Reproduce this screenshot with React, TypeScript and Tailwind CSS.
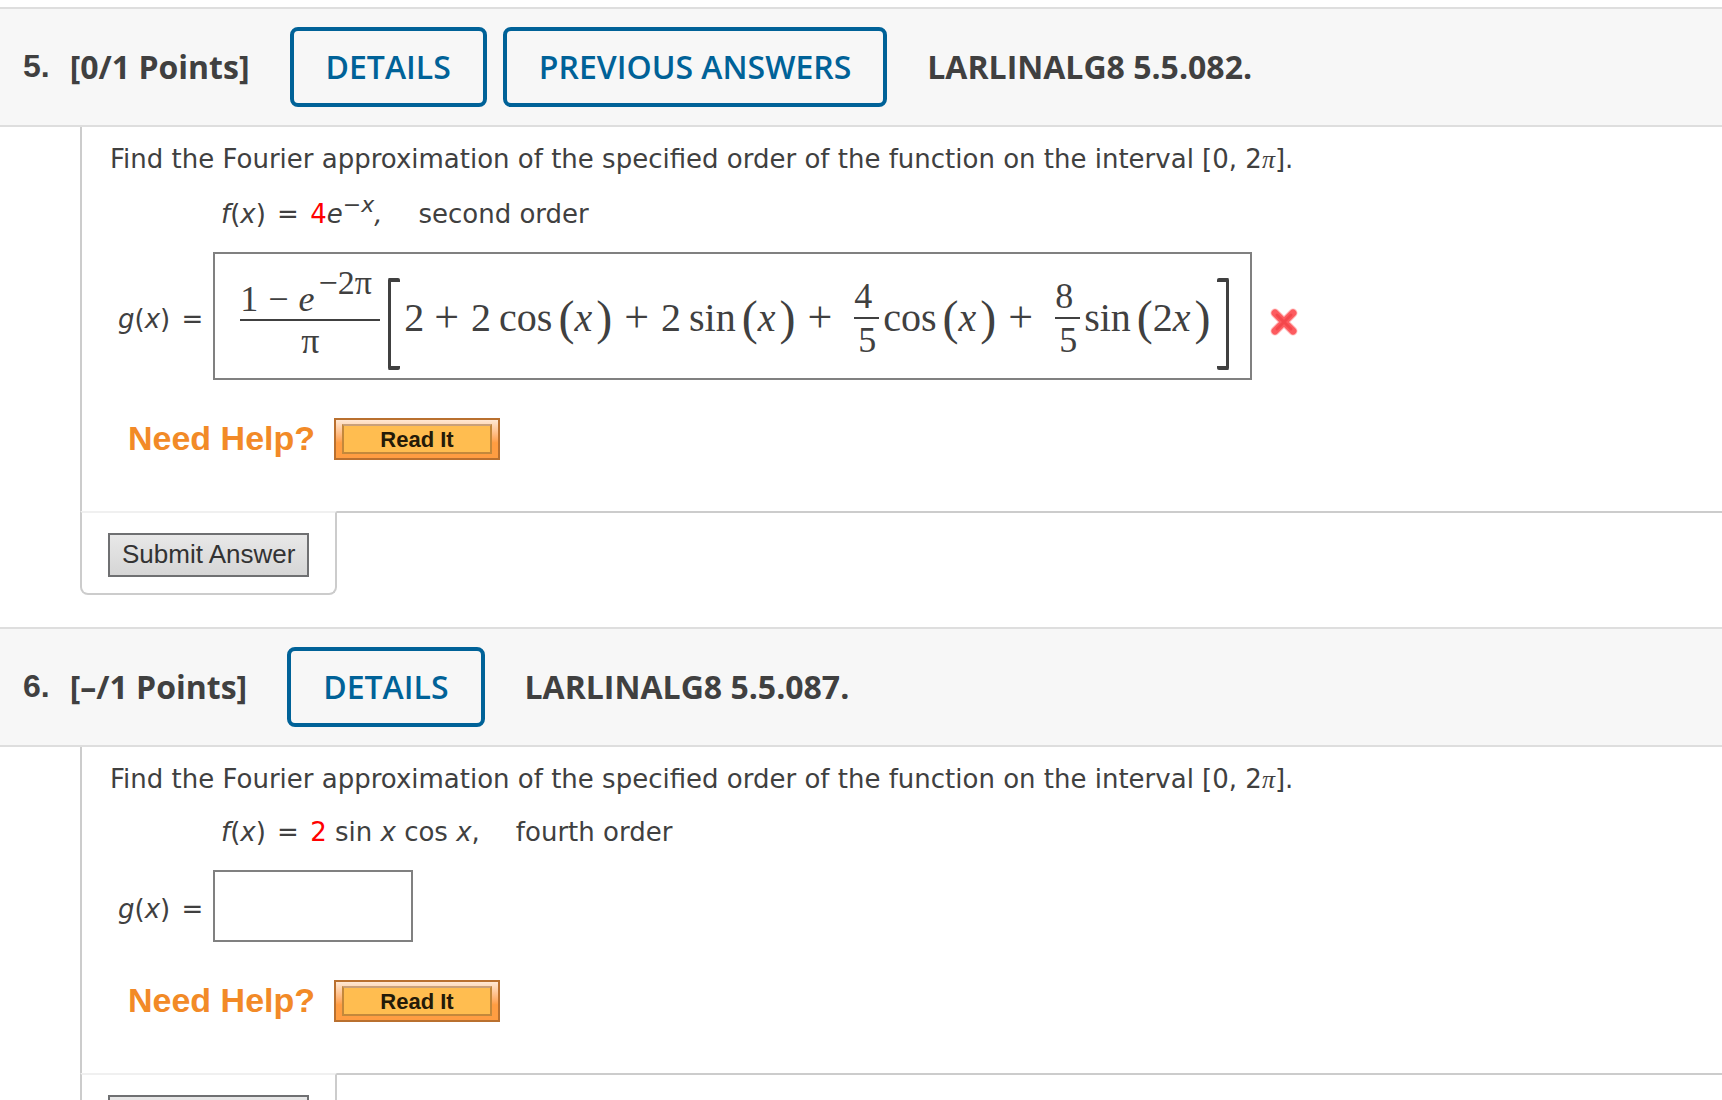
import type { ReactNode } from "react";

const Var = ({ children }: { children: ReactNode }) => <i className="italic">{children}</i>;

const Equals = () => <span className="mx-[3px]"> = </span>;

const Plus = () => <span className="text-[44px]">+</span>;

// Function name followed by its argument in tall parentheses
function Call({ name, children }: { name: string; children: ReactNode }) {
  return (
    <span className="flex items-center">
      <span>{name}</span>
      <span className="ml-1.5 text-[48px]">(</span>
      <span>{children}</span>
      <span className="ml-1 text-[48px]">)</span>
    </span>
  );
}

function SmallFraction({ top, bottom }: { top: string; bottom: string }) {
  return (
    <span className="mr-1 ml-[22px] flex w-[25px] flex-col text-[36px] leading-[42px]">
      <span className="border-b-2 border-[#404040]">{top}</span>
      <span className="pl-1">{bottom}</span>
    </span>
  );
}

function FourierAnswer() {
  return (
    <div
      role="textbox"
      aria-label="g(x)"
      tabIndex={0}
      className="flex h-32 items-center border-2 border-[#808080] pt-1 pr-[21px] pl-[25px] font-['Liberation_Serif',serif] text-[40px] leading-10"
    >
      <span className="flex w-[140px] flex-col pt-1 text-[36px]">
        <span className="flex border-b-2 border-[#404040]">
          <span>1</span>
          <span className="mx-2.5">−</span>
          <span>
            <Var>e</Var>
            <sup className="ml-1 text-[34px] leading-none">−2π</sup>
          </span>
        </span>
        <span className="text-center">π</span>
      </span>

      <span className="mt-3 ml-2 h-[92px] w-3 rounded-xs border-y-4 border-l-3 border-[#404040]" />

      <span className="ml-1 flex items-center">
        <span className="mr-2.5">2</span>
        <Plus />
        <span className="mr-2 ml-3">2</span>
        <Call name="cos">
          <Var>x</Var>
        </Call>
        <span className="w-3" />
        <Plus />
        <span className="mr-2 ml-3">2</span>
        <Call name="sin">
          <Var>x</Var>
        </Call>
        <span className="w-3" />
        <Plus />
        <SmallFraction top="4" bottom="5" />
        <Call name="cos">
          <Var>x</Var>
        </Call>
        <span className="w-3" />
        <Plus />
        <SmallFraction top="8" bottom="5" />
        <Call name="sin">
          2<Var>x</Var>
        </Call>
      </span>

      <span className="mt-3 ml-1.5 h-[92px] w-3 rounded-xs border-y-4 border-r-3 border-[#404040]" />
    </div>
  );
}

function WrongMark() {
  return (
    <svg width="30" height="30" viewBox="0 0 30 30" role="img" aria-label="incorrect" className="mt-3 ml-[17px]">
      <path d="M6 6 24 24M24 6 6 24" stroke="#ffc4c4" strokeWidth="9" strokeLinecap="round" />
      <path d="M6 6 24 24M24 6 6 24" stroke="#fd5b5f" strokeWidth="7" strokeLinecap="round" />
      <path d="M8 8 22 22M22 8 8 22" stroke="#f4474b" strokeWidth="3" strokeLinecap="round" />
    </svg>
  );
}

function HeaderButton({ children }: { children: ReactNode }) {
  return (
    <button
      type="button"
      className="h-20 rounded-lg border-4 border-[#006298] px-8 text-[32px] font-semibold text-[#006298]"
    >
      {children}
    </button>
  );
}

type QuestionProps = {
  number: number;
  points: string;
  code: string;
  hasPrevious?: boolean;
  formula: ReactNode;
  answer: ReactNode;
};

function Question({ number, points, code, hasPrevious, formula, answer }: QuestionProps) {
  return (
    <section className="mb-8">
      <header className="flex h-[120px] items-center border-y-2 border-[#dedede] bg-[#f7f7f7] pl-[23px] font-['Open_Sans',sans-serif] text-[32px] leading-10 font-bold">
        <span className="pb-0.5 font-['Liberation_Sans',sans-serif]">{number}.</span>
        <span className="ml-5">[{points} Points]</span>
        <div className="mx-10 flex gap-4">
          <HeaderButton>DETAILS</HeaderButton>
          {hasPrevious && <HeaderButton>PREVIOUS ANSWERS</HeaderButton>}
        </div>
        <h2>{code}</h2>
      </header>

      <div className="ml-20 border-l-2 border-[#cccccc] pt-4 pl-7">
        <p>
          Find the Fourier approximation of the specified order of the function on the interval [0, 2
          <span className="font-['Liberation_Serif',serif] italic">π</span>].
        </p>
        <div className="mt-5 mb-[22px] ml-[111px] flex">{formula}</div>
        <div className="ml-2 flex items-center">
          <span className="mr-[7px] pt-1.5">
            <Var>g</Var>(<Var>x</Var>)<Equals />
          </span>
          {answer}
        </div>
        <div className="mt-[38px] ml-[18px] flex h-[42px] items-center font-['Liberation_Sans',sans-serif] font-bold">
          <span className="w-[206px] pb-0.5 text-[34px] text-[#f28a27]">Need Help?</span>
          <button
            type="button"
            className="h-[42px] w-[166px] border-2 border-[#b9702f] bg-linear-to-b from-[#ffe8d4] to-[#ff9d42] to-60% px-1.5 py-1 text-[22px] leading-6 text-[#241a08]"
          >
            <span className="block border-2 border-[#c3883b] border-t-[#c9a07a] bg-[#ffbd50] pt-0.5">Read It</span>
          </button>
        </div>
        <div className="h-[51px]" />
      </div>

      <div className="ml-20 flex">
        <div className="rounded-b-lg border-2 border-t-[#f0f0f0] border-[#cccccc] px-[26px] pt-5 pb-4">
          <button
            type="button"
            className="h-11 border-2 border-[#6f7072] bg-linear-to-b from-[#e8e8e8] to-[#d6d6d6] px-3 pb-0.5 font-['Liberation_Sans',sans-serif] text-[26px] leading-8 text-[#333333]"
          >
            Submit Answer
          </button>
        </div>
        <div className="flex-1 border-t-2 border-[#cccccc]" />
      </div>
    </section>
  );
}

export default function App() {
  return (
    <main className="min-h-screen bg-white pt-[7px] font-['DejaVu_Sans',sans-serif] text-[26px] leading-8 text-[#404040]">
      <Question
        number={5}
        points="0/1"
        code="LARLINALG8 5.5.082."
        hasPrevious
        formula={
          <>
            <span className="pt-0.5">
              <Var>f</Var>(<Var>x</Var>)<Equals />
              <span className="text-[#ff0000]">4</span>
              <Var>e</Var>
              <sup className="text-[22px] leading-none">
                −<Var>x</Var>
              </sup>
              <Var>,</Var>
            </span>
            <span className="ml-9 pt-0.5">second order</span>
          </>
        }
        answer={
          <>
            <FourierAnswer />
            <WrongMark />
          </>
        }
      />
      <Question
        number={6}
        points="–/1"
        code="LARLINALG8 5.5.087."
        formula={
          <>
            <span>
              <Var>f</Var>(<Var>x</Var>)<Equals />
              <span className="text-[#ff0000]">2</span> sin <Var>x</Var> cos <Var>x</Var>,
            </span>
            <span className="ml-9">fourth order</span>
          </>
        }
        answer={
          <input type="text" aria-label="g(x)" className="h-[72px] w-[200px] border-2 border-[#808080] px-4" />
        }
      />
    </main>
  );
}
